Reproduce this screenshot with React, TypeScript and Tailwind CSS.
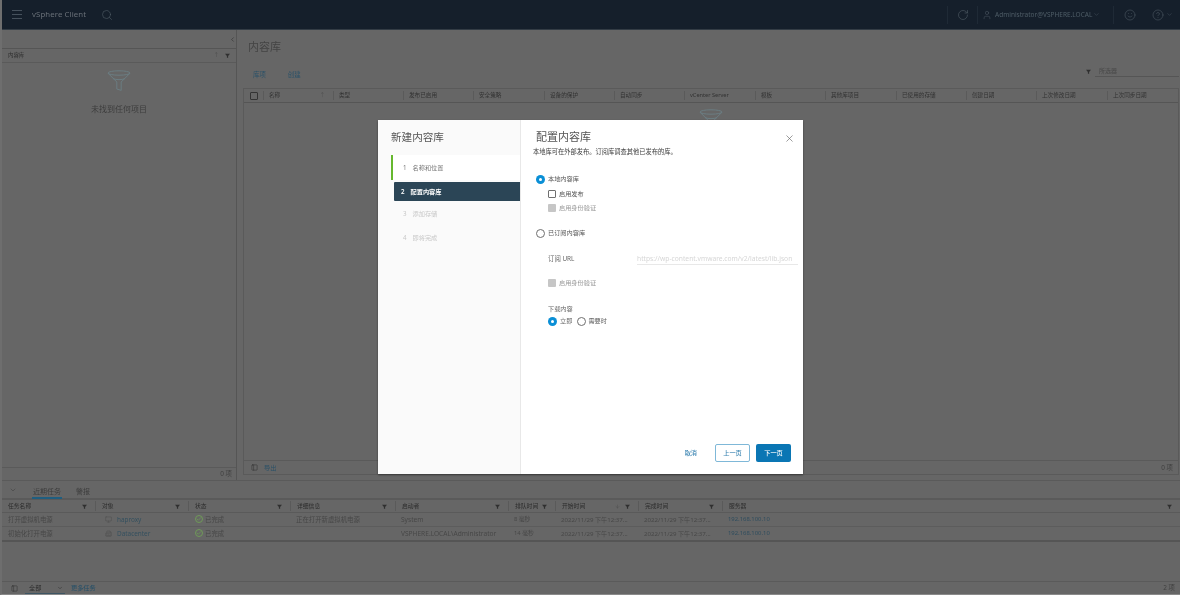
import { CircleHelp, ChevronDown, ChevronLeft, Search, RotateCw, User, X, Smile, Check, Monitor, Building2, ArrowDown, PanelLeft } from "lucide-react";

const font = "[font-family:'Noto_Sans','Noto_Sans_CJK_SC',sans-serif]";

function FilterMark({ className = "text-[#2f2f2f]" }: { className?: string }) {
  return (
    <svg viewBox="0 0 8 8" className={`w-[5px] h-[5px] shrink-0 ${className}`}>
      <path d="M0 1h8L5 4.6V8L3 7V4.6z" fill="currentColor" />
    </svg>
  );
}

function Funnel({ className }: { className: string }) {
  return (
    <svg viewBox="0 0 24 24" className={className} fill="none" stroke="currentColor" strokeWidth="1">
      <ellipse cx="12" cy="3" rx="11" ry="2.2" />
      <path d="M1 3.2 9.8 12v7l4.4 1.4V12L23 3.2" />
      <path d="M6 8.6c3.5 1.4 8.5 1.4 12 0" />
    </svg>
  );
}

const headCols: [string, number][] = [
  ["类型", 70],
  ["发布已启用", 70],
  ["安全策略", 71],
  ["设备的保护", 70],
  ["自动同步", 70],
  ["vCenter Server", 71],
  ["模板", 70],
  ["其他库项目", 71],
  ["已使用的存储", 70],
  ["创建日期", 70],
  ["上次修改日期", 71],
  ["上次同步日期", 71],
];

type TaskCol = { label: string; w: string; sort?: boolean };
const taskCols: TaskCol[] = [
  { label: "任务名称", w: "w-[93px]" },
  { label: "对象", w: "w-[93px]" },
  { label: "状态", w: "w-[102px]" },
  { label: "详细信息", w: "w-[105px]" },
  { label: "启动者", w: "w-[113px]" },
  { label: "排队时间", w: "w-[47px]" },
  { label: "开始时间", w: "w-[83px]", sort: true },
  { label: "完成时间", w: "w-[84px]" },
  { label: "服务器", w: "flex-1" },
];

const rows = [
  { task: "打开虚拟机电源", obj: "haproxy", kind: "vm", detail: "正在打开新虚拟机电源", by: "System", q: "8 毫秒", t: "2022/11/29 下午12:37..." },
  { task: "初始化打开电源", obj: "Datacenter", kind: "dc", detail: "", by: "VSPHERE.LOCAL\\Administrator", q: "14 毫秒", t: "2022/11/29 下午12:37..." },
];

function Radio({ on }: { on?: boolean }) {
  return on ? (
    <span className="w-[9px] h-[9px] rounded-full bg-[#0a8fd6] flex items-center justify-center shrink-0">
      <span className="w-[3px] h-[3px] rounded-full bg-white" />
    </span>
  ) : (
    <span className="block w-[9px] h-[9px] rounded-full border border-[#6f6f6f] bg-white shrink-0" />
  );
}

function Check2({ disabled }: { disabled?: boolean }) {
  return disabled ? (
    <span className="w-[8px] h-[8px] rounded-[1px] bg-[#c6c6c6] shrink-0" />
  ) : (
    <span className="w-[8px] h-[8px] rounded-[1px] border border-[#6f6f6f] bg-white shrink-0" />
  );
}

function Dialog() {
  return (
    <div className="absolute left-[376px] top-[120px] w-[425px] h-[354px] bg-white flex shadow-[0_1px_2px_rgba(0,0,0,0.4)]">
      <div className="w-[142px] bg-[#fafafa] pl-[13px] pt-[9px] shrink-0">
        <div className="text-[10.6px] leading-[16px] text-[#555] h-[16px]">新建内容库</div>
        <div className="mt-[10px] h-[25px] bg-white border-l-2 border-[#66b82e] flex items-center pl-[10px] text-[6.2px] text-[#777] gap-[6px]">
          <span>1</span><span>名称和位置</span>
        </div>
        <div className="mt-[2px] ml-[3px] h-[19px] bg-[#2b4556] rounded-l-[1px] flex items-center pl-[7px] text-[6.2px] text-white gap-[6px] font-semibold">
          <span>2</span><span>配置内容库</span>
        </div>
        <div className="mt-[7px] h-[12px] flex items-center pl-[12px] text-[6.2px] text-[#c8c8c8] gap-[6px]">
          <span>3</span><span>添加存储</span>
        </div>
        <div className="mt-[12px] h-[12px] flex items-center pl-[12px] text-[6.2px] text-[#c8c8c8] gap-[6px]">
          <span>4</span><span>即将完成</span>
        </div>
      </div>
      <div className="flex-1 flex flex-col border-l border-[#e8e8e8] pl-[12px] pr-[12px] relative">
        <div className="flex items-center justify-between pt-[9px] pl-[3px] h-[25px]">
          <span className="text-[11px] leading-[16px] text-[#555]">配置内容库</span>
          <X className="w-[11px] h-[11px] text-[#666] -mr-[4px] mt-[2px]" strokeWidth={1.4} />
        </div>
        <div className="text-[6.26px] leading-[9px] text-[#3a3a3a] mt-[2px]">本地库可在外部发布。订阅库调查其他已发布的库。</div>
        <div className="flex items-center gap-[3px] mt-[18px] ml-[3px] text-[6.2px] text-[#555] h-[10px]">
          <Radio on /><span>本地内容库</span>
        </div>
        <div className="flex items-center gap-[3px] mt-[5px] ml-[15px] text-[6.2px] text-[#555] h-[9px]">
          <Check2 /><span>启用发布</span>
        </div>
        <div className="flex items-center gap-[3px] mt-[5px] ml-[15px] text-[6.2px] text-[#999] h-[9px]">
          <Check2 disabled /><span>启用身份验证</span>
        </div>
        <div className="flex items-center gap-[3px] mt-[16px] ml-[3px] text-[6.2px] text-[#555] h-[10px]">
          <Radio /><span>已订阅内容库</span>
        </div>
        <div className="flex items-center mt-[15px] ml-[15px] h-[11px]">
          <span className="text-[6.4px] text-[#666] w-[89px] shrink-0">订阅 URL</span>
          <span className="text-[6.7px] text-[#d6d6d6] border-b border-[#e8e8e8] flex-1 -mr-[7px] h-[12px] leading-[11px] whitespace-nowrap overflow-hidden">https://wp-content.vmware.com/v2/latest/lib.json</span>
        </div>
        <div className="flex items-center gap-[3px] mt-[14px] ml-[15px] text-[6.2px] text-[#999] h-[9px]">
          <Check2 disabled /><span>启用身份验证</span>
        </div>
        <div className="mt-[17px] ml-[15px] text-[6.2px] text-[#666] h-[9px] leading-[9px]">下载内容</div>
        <div className="flex items-center mt-[3px] ml-[15px] text-[6.2px] text-[#666] h-[10px]">
          <Radio on /><span className="ml-[3px] mr-[5px]">立即</span><Radio /><span className="ml-[2px]">需要时</span>
        </div>
        <div className="mt-auto mb-[12px] flex items-center justify-end text-[6.2px] font-medium">
          <span className="text-[#3d86b3] mr-[18px]">取消</span>
          <span className="w-[35px] h-[18px] rounded-[2px] border border-[#7fb8d8] text-[#3d86b3] flex items-center justify-center">上一页</span>
          <span className="w-[35px] h-[18px] rounded-[2px] bg-[#0a76b4] text-white flex items-center justify-center ml-[6px]">下一页</span>
        </div>
      </div>
    </div>
  );
}

export default function App() {
  return (
    <div className={`relative w-[1180px] h-[595px] overflow-hidden bg-[#666666] flex flex-col border-l-2 border-b border-l-[#6e6e6e] border-b-[#8a8a8a] blur-[0.4px] ${font}`}>
      <header className="h-[30px] shrink-0 bg-[#151f2b] border-b border-[#333c45] flex items-center text-[#4c5862] pl-[10px]">
        <div className="flex flex-col gap-[3px] w-[10px]">
          <span className="h-px bg-[#46515c]" /><span className="h-px bg-[#46515c]" /><span className="h-px bg-[#46515c]" />
        </div>
        <span className="ml-[10px] text-[7.8px] text-[#697078] tracking-[0.1px]">vSphere Client</span>
        <Search className="ml-[15px] w-[12px] h-[12px]" strokeWidth={1.3} />
        <div className="ml-auto flex items-center h-full mr-[6px]">
          <div className="flex items-center justify-center w-[31px] h-[18px] border-x border-[#1f2a36]">
            <RotateCw className="w-[12px] h-[12px]" strokeWidth={1.3} />
          </div>
          <div className="flex items-center w-[136px] h-[18px] border-r border-[#1f2a36] pl-[4px]">
            <User className="w-[10px] h-[10px]" strokeWidth={1.3} />
            <span className="ml-[3px] text-[6.5px] text-[#4f5d67] whitespace-nowrap">Administrator@VSPHERE.LOCAL</span>
            <ChevronDown className="ml-[1px] w-[7px] h-[7px]" strokeWidth={1.5} />
          </div>
          <div className="w-[29px] flex justify-center ml-[1px]">
            <Smile className="w-[12px] h-[12px]" strokeWidth={1.2} />
          </div>
          <div className="w-[30px] flex items-center pl-[8px]">
            <CircleHelp className="w-[12px] h-[12px]" strokeWidth={1.2} />
            <ChevronDown className="ml-[2px] w-[7px] h-[7px]" strokeWidth={1.5} />
          </div>
        </div>
      </header>

      <div className="flex h-[451px] shrink-0 border-b border-[#5a5a5a]">
        <aside className="w-[235px] shrink-0 border-r border-[#555] flex flex-col">
          <div className="h-[19px] flex justify-end items-center text-[#2e2e2e] border-b border-[#555] shrink-0">
            <ChevronLeft className="w-[7px] h-[7px]" strokeWidth={2} />
          </div>
          <div className="h-[14px] flex items-center px-[6px] text-[5.4px] text-[#2c2c2c] border-b border-[#5a5a5a] shrink-0">
            <span>内容库</span>
            <span className="ml-auto text-[5.5px] text-[#4c4c4c] mr-[6px]">↑</span>
            <FilterMark />
          </div>
          <div className="flex-1 flex flex-col items-center pt-[7px]">
            <Funnel className="w-[24px] h-[24px] text-[#6b7d82]" />
            <div className="mt-[9px] text-[8px] leading-[11px] text-[#3d3d3d]">未找到任何项目</div>
          </div>
          <div className="h-[13px] border-t border-[#5a5a5a] flex items-center justify-end pr-[4px] text-[6.4px] text-[#404040] shrink-0">0 项</div>
        </aside>
        <main className="flex-1 flex flex-col pl-[6px] pr-[3px]">
          <div className="text-[11px] leading-[16px] text-[#444] pl-[5px] pt-[9px] h-[25px] shrink-0">内容库</div>
          <div className="flex items-start h-[33px] shrink-0 pl-[10px] text-[6.4px] text-[#2a5168]">
            <span className="mt-[15px] leading-[9px]">库项</span><span className="ml-[22px] mt-[15px] leading-[9px]">创建</span>
            <FilterMark className="ml-auto text-[#2f2f2f] mt-[14px]" />
            <span className="ml-[4px] w-[84px] h-[10px] mt-[12px] pl-[4px] border-b border-[#555] text-[#484848] text-[6px] leading-[9px]">所选器</span>
          </div>
          <div className="flex-1 border border-[#5a5a5a] flex flex-col">
            <div className="h-[14px] border-b border-[#555] flex items-center shrink-0 text-[5.6px] text-[#323232]">
              <div className="w-[19px] flex justify-center shrink-0"><span className="w-[8px] h-[8px] border border-[#333] rounded-[1px]" /></div>
              <div className="w-[70px] h-[9px] border-l border-[#5a5a5a] pl-[5px] flex items-center shrink-0">
                <span>名称</span><span className="ml-auto mr-[8px] text-[#505050]">↑</span>
              </div>
              {headCols.map(([t, w]) => (
                <div key={t} style={{ width: w }} className="h-[9px] border-l border-[#5a5a5a] pl-[5px] flex items-center shrink-0 whitespace-nowrap">{t}</div>
              ))}
            </div>
            <div className="flex-1 flex justify-center">
              <Funnel className="w-[24px] h-[24px] text-[#6b7d82] mt-[6px]" />
            </div>
            <div className="h-[14px] border-t border-[#5a5a5a] flex items-center pl-[7px] pr-[5px] shrink-0 text-[6.2px]">
              <PanelLeft className="w-[7px] h-[7px] text-[#2c2c2c]" strokeWidth={1.6} />
              <span className="ml-[6px] text-[#2a5168]">导出</span>
              <span className="ml-auto text-[#404040] text-[6.4px]">0 项</span>
            </div>
          </div>
          <div className="h-[5px] shrink-0" />
        </main>
      </div>

      <section className="flex-1 flex flex-col min-h-0">
        <div className="h-[19px] shrink-0 flex items-start border-b-2 border-[#5a5a5a] text-[#3d3d3d]">
          <div className="w-[22px] h-full flex justify-center items-center"><ChevronDown className="w-[8px] h-[8px]" strokeWidth={1.5} /></div>
          <span className="ml-[8px] text-[7px] leading-[13px] pt-[4px] h-[18px] border-b-2 border-[#1f5e80] px-px">近期任务</span>
          <span className="ml-[14px] text-[7px] leading-[13px] pt-[4px]">警报</span>
        </div>
        <div className="h-[13px] shrink-0 flex items-center border-b border-[#5a5a5a] text-[5.8px] text-[#2b2b2b]">
          {taskCols.map((c, i) => (
            <div key={c.label} className={`${c.w} h-[10px] flex items-center shrink-0 pl-[6px] pr-[8px] ${i ? "border-l border-[#5a5a5a]" : ""}`}>
              <span>{c.label}</span>
              <span className="ml-auto flex items-center gap-[5px]">
                {c.sort && <ArrowDown className="w-[5px] h-[5px] text-[#4c4c4c]" />}
                <FilterMark />
              </span>
            </div>
          ))}
        </div>
        {rows.map((r, ri) => (
          <div key={r.task} className={`shrink-0 flex items-center text-[6.4px] text-[#474747] ${ri ? "h-[15px] border-b-2 border-[#555]" : "h-[14px] border-b border-[#5c5c5c]"}`}>
            <div className="w-[93px] pl-[6px] shrink-0">{r.task}</div>
            <div className="w-[93px] pl-[10px] shrink-0 flex items-center gap-[5px] text-[#34505f]">
              {r.kind === "vm" ? (
                <Monitor className="w-[7px] h-[7px] text-[#4f4f4f] shrink-0" strokeWidth={1.5} />
              ) : (
                <Building2 className="w-[7px] h-[7px] text-[#4f4f4f] shrink-0" strokeWidth={1.5} />
              )}
              <span>{r.obj}</span>
            </div>
            <div className="w-[102px] pl-[7px] shrink-0 flex items-center gap-[2px]">
              <span className="w-[8px] h-[8px] rounded-full border border-[#6f9a58] flex items-center justify-center shrink-0">
                <Check className="w-[6px] h-[6px] text-[#6f9a58]" strokeWidth={3} />
              </span>
              <span>已完成</span>
            </div>
            <div className="w-[105px] pl-[6px] shrink-0">{r.detail}</div>
            <div className="w-[113px] pl-[6px] shrink-0 whitespace-nowrap text-[6.6px]">{r.by}</div>
            <div className="w-[47px] pl-[6px] shrink-0 whitespace-nowrap text-[5.8px]">{r.q}</div>
            <div className="w-[83px] pl-[6px] shrink-0 whitespace-nowrap text-[6.1px]">{r.t}</div>
            <div className="w-[84px] pl-[6px] shrink-0 whitespace-nowrap text-[6.1px]">{r.t}</div>
            <div className="flex-1 pl-[6px] text-[#2f4d5e] text-[5.9px]">192.168.100.10</div>
          </div>
        ))}
        <div className="flex-1" />
        <div className="h-[13px] shrink-0 border-t border-[#5a5a5a] flex items-center pl-[9px] pr-[5px] text-[6.2px] text-[#2c2c2c]">
          <PanelLeft className="w-[7px] h-[7px]" strokeWidth={1.6} />
          <div className="ml-[7px] w-[40px] h-[11px] border-b border-[#3d5563] flex items-center justify-between pl-[4px] pr-[2px]">
            <span>全部</span><ChevronDown className="w-[6px] h-[6px]" />
          </div>
          <span className="ml-[6px] text-[#244f68]">更多任务</span>
          <span className="ml-auto text-[#404040] text-[6.4px]">2 项</span>
        </div>
      </section>
      <Dialog />
    </div>
  );
}
